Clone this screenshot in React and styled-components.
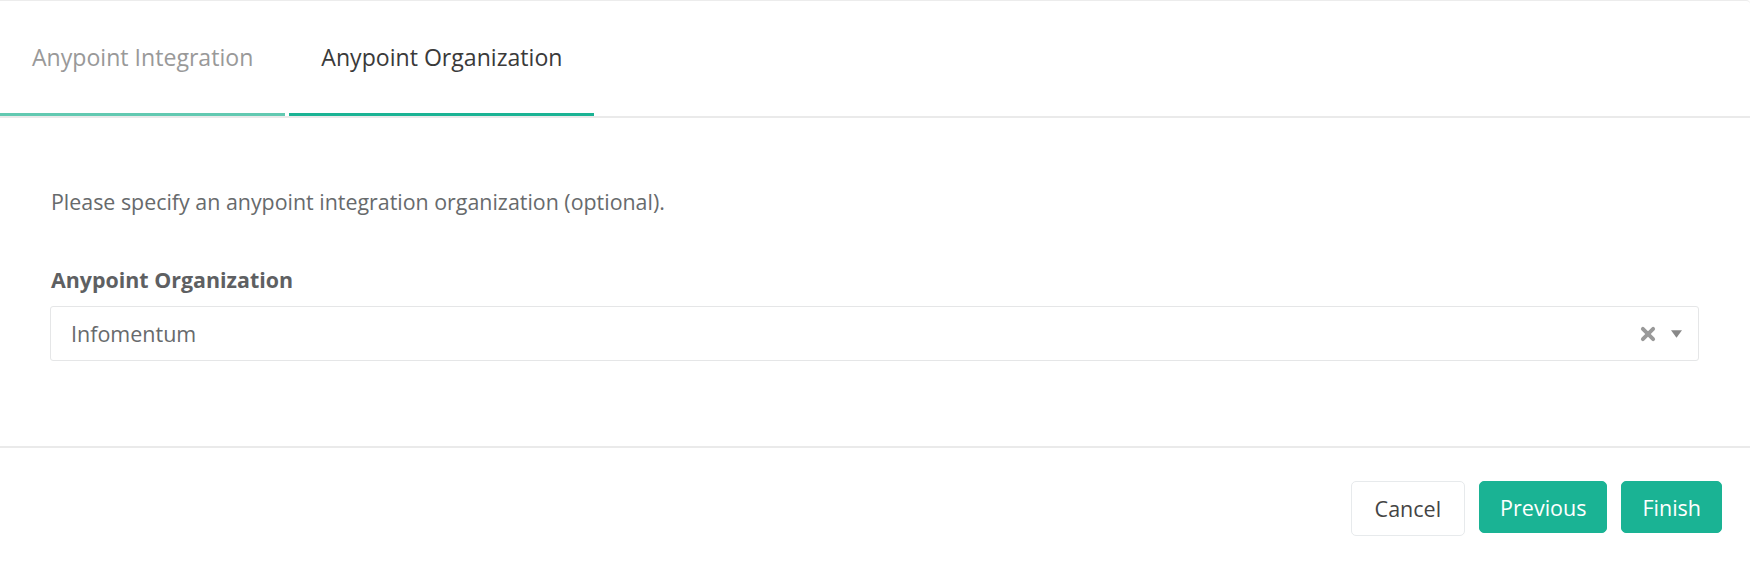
import React from 'react';
import styled, { createGlobalStyle } from 'styled-components';

const GlobalStyle = createGlobalStyle`
  html, body {
    margin: 0;
    padding: 0;
    background: #fff;
  }
  body {
    font-family: 'Open Sans', 'Liberation Sans', sans-serif;
    color: #676a6c;
  }
`;

const tabs = [
  { label: 'Anypoint Integration', done: true },
  { label: 'Anypoint Organization', active: true },
];

const App = () => {
  return (
    <>
      <GlobalStyle />
      <Panel>
        <TabBar>
          {tabs.map((tab) => (
            <Tab key={tab.label} active={tab.active} done={tab.done}>
              {tab.label}
            </Tab>
          ))}
        </TabBar>
        <Body>
          <Hint>Please specify an anypoint integration organization (optional).</Hint>
          <Label>Anypoint Organization</Label>
          <Select>
            <SelectValue>Infomentum</SelectValue>
            <SelectIcons>
              <ClearIcon viewBox="0 0 14 14">
                <path d="M2.5 2.5 L11.5 11.5 M11.5 2.5 L2.5 11.5" stroke="#999" strokeWidth="3.4" strokeLinecap="round" />
              </ClearIcon>
              <Caret viewBox="0 0 10 7">
                <path d="M0 0 H10 L5 7 Z" fill="#888" />
              </Caret>
            </SelectIcons>
          </Select>
        </Body>
        <Footer>
          <Button>Cancel</Button>
          <Button primary>Previous</Button>
          <Button primary>Finish</Button>
        </Footer>
      </Panel>
    </>
  );
};

const Panel = styled.div`
  width: 1750px;
  height: 566px;
  box-sizing: border-box;
  border-top: 1px solid #ececec;
  border-top-right-radius: 4px;
  background: #fff;
  display: flex;
  flex-direction: column;
`;

const TabBar = styled.div`
  display: flex;
  gap: 4px;
  border-bottom: 2px solid #eaeaea;
`;

const Tab = styled.div`
  height: 112px;
  padding: 0 32px;
  display: flex;
  align-items: center;
  font-size: 23.1px;
  color: ${(p) => (p.active ? '#3a3a3a' : '#999')};
  border-bottom: 3px solid ${(p) => (p.active ? '#1ab394' : p.done ? '#62c9b1' : 'transparent')};
`;

const Body = styled.div`
  padding: 70px 51px 0 50px;
  height: 330px;
  box-sizing: border-box;
  border-bottom: 2px solid #eaeaea;
`;

const Hint = styled.p`
  margin: 0 0 50px 1px;
  font-size: 21.4px;
  line-height: 28px;
  color: #676a6c;
`;

const Label = styled.div`
  margin: 0 0 12px 1px;
  font-size: 21.4px;
  font-weight: 700;
  line-height: 28px;
  color: #5e6062;
`;

const Select = styled.div`
  height: 55px;
  box-sizing: border-box;
  border: 1px solid #e5e6e7;
  border-radius: 3px;
  display: flex;
  align-items: center;
  padding: 0 16px 0 20px;
`;

const SelectValue = styled.div`
  flex: 1;
  font-size: 21.5px;
  color: #676a6c;
`;

const SelectIcons = styled.div`
  display: flex;
  align-items: center;
  gap: 15px;
`;

const ClearIcon = styled.svg`
  width: 16px;
  height: 16px;
`;

const Caret = styled.svg`
  width: 11px;
  height: 8px;
`;

const Footer = styled.div`
  display: flex;
  justify-content: flex-end;
  align-items: flex-start;
  gap: 14px;
  padding: 33px 28px 0 0;
`;

const Button = styled.button`
  font-family: 'Open Sans', 'Liberation Sans', sans-serif;
  font-size: 21.5px;
  height: ${(p) => (p.primary ? '52px' : '55px')};
  padding: ${(p) => (p.primary ? '0 20px' : '0 23px')};
  border-radius: 5px;
  border: 1px solid ${(p) => (p.primary ? '#1ab394' : '#e7eaec')};
  background: ${(p) => (p.primary ? '#1ab394' : '#fff')};
  color: ${(p) => (p.primary ? '#fff' : '#444')};
  cursor: pointer;
`;

export default App;
